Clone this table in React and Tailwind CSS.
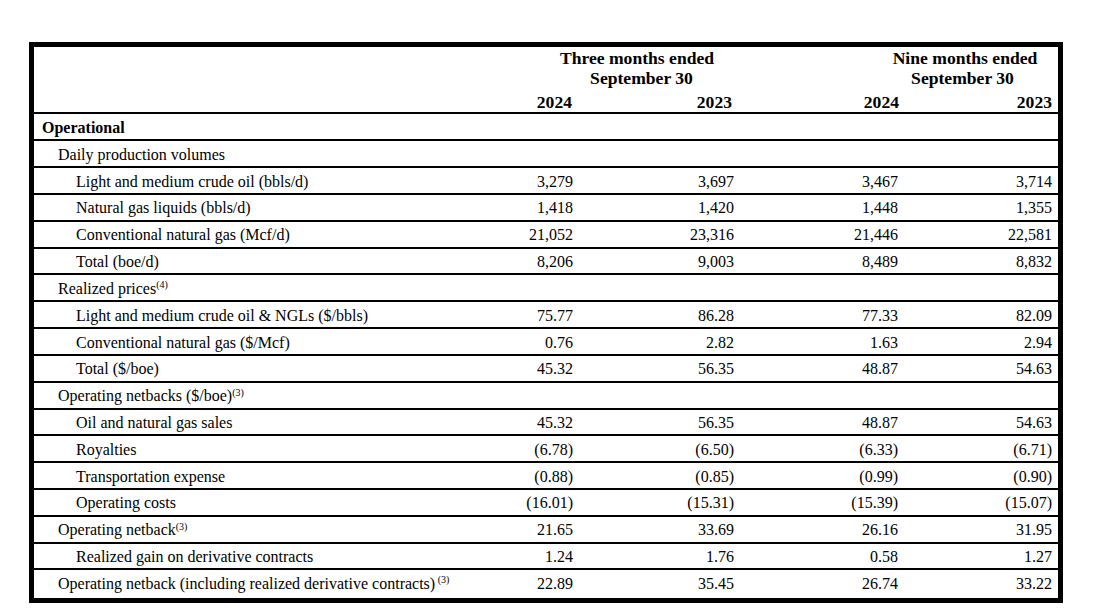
import React from "react";

const rows = [
  { label: "Operational", indent: 0, bold: true },
  { label: "Daily production volumes", indent: 1 },
  { label: "Light and medium crude oil (bbls/d)", indent: 2, v: ["3,279", "3,697", "3,467", "3,714"] },
  { label: "Natural gas liquids (bbls/d)", indent: 2, v: ["1,418", "1,420", "1,448", "1,355"] },
  { label: "Conventional natural gas (Mcf/d)", indent: 2, v: ["21,052", "23,316", "21,446", "22,581"] },
  { label: "Total (boe/d)", indent: 2, v: ["8,206", "9,003", "8,489", "8,832"] },
  { label: "Realized prices", sup: "(4)", indent: 1 },
  { label: "Light and medium crude oil & NGLs ($/bbls)", indent: 2, v: ["75.77", "86.28", "77.33", "82.09"] },
  { label: "Conventional natural gas ($/Mcf)", indent: 2, v: ["0.76", "2.82", "1.63", "2.94"] },
  { label: "Total ($/boe)", indent: 2, v: ["45.32", "56.35", "48.87", "54.63"] },
  { label: "Operating netbacks ($/boe)", sup: "(3)", indent: 1 },
  { label: "Oil and natural gas sales", indent: 2, v: ["45.32", "56.35", "48.87", "54.63"] },
  { label: "Royalties", indent: 2, v: ["(6.78)", "(6.50)", "(6.33)", "(6.71)"] },
  { label: "Transportation expense", indent: 2, v: ["(0.88)", "(0.85)", "(0.99)", "(0.90)"] },
  { label: "Operating costs", indent: 2, v: ["(16.01)", "(15.31)", "(15.39)", "(15.07)"] },
  { label: "Operating netback", sup: "(3)", indent: 1, v: ["21.65", "33.69", "26.16", "31.95"] },
  { label: "Realized gain on derivative contracts", indent: 2, v: ["1.24", "1.76", "0.58", "1.27"] },
  { label: "Operating netback (including realized derivative contracts)", sup: " (3)", indent: 1, v: ["22.89", "35.45", "26.74", "33.22"], last: true },
];

const indentCls = ["pl-[8px]", "pl-[24px]", "pl-[42px]"];

function Row({ r }) {
  return (
    <div
      className={
        "flex items-start pt-[3.5px] leading-[20px] " +
        (r.last ? "h-[28px]" : "h-[26.84px] border-b-2 border-black")
      }
    >
      <div className={"w-[420px] whitespace-nowrap " + indentCls[r.indent] + (r.bold ? " font-bold" : "")}>
        {r.label}
        {r.sup && <sup className="text-[10px] top-[-0.55em]">{r.sup}</sup>}
      </div>
      {r.v ? (
        <>
          <div className="w-[125px] text-right pr-[6px]">{r.v[0]}</div>
          <div className="w-[161px] text-right pr-[6px]">{r.v[1]}</div>
          <div className="w-[164px] text-right pr-[6px]">{r.v[2]}</div>
          <div className="w-[154px] text-right pr-[6px]">{r.v[3]}</div>
        </>
      ) : null}
    </div>
  );
}

export default function App() {
  return (
    <div
      className="w-[1094px] h-[615px] bg-white text-black pt-[42px] pl-[29px]"
      style={{ fontFamily: '"Liberation Serif", "Times New Roman", serif' }}
    >
      <div className="w-[1034px] border-[5px] border-black text-[16px]">
        <div className="h-[67.4px] border-b-2 border-black flex flex-col font-bold text-[17.6px] leading-[20.3px]">
          <div className="flex pt-[0.6px]">
            <div className="ml-[523px] w-[160px] text-center">
              <div className="whitespace-nowrap">Three months ended</div>
              <div className="whitespace-nowrap pl-[9px]">September 30</div>
            </div>
            <div className="ml-[168px] w-[160px] text-center">
              <div className="whitespace-nowrap">Nine months ended</div>
              <div className="whitespace-nowrap pr-[5px]">September 30</div>
            </div>
          </div>
          <div className="flex mt-auto">
            <div className="w-[420px]" />
            <div className="w-[125px] text-right pr-[7px]">2024</div>
            <div className="w-[161px] text-right pr-[8px]">2023</div>
            <div className="w-[164px] text-right pr-[5px]">2024</div>
            <div className="w-[154px] text-right pr-[6px]">2023</div>
          </div>
        </div>
        {rows.map((r, i) => (
          <Row key={i} r={r} />
        ))}
      </div>
    </div>
  );
}
